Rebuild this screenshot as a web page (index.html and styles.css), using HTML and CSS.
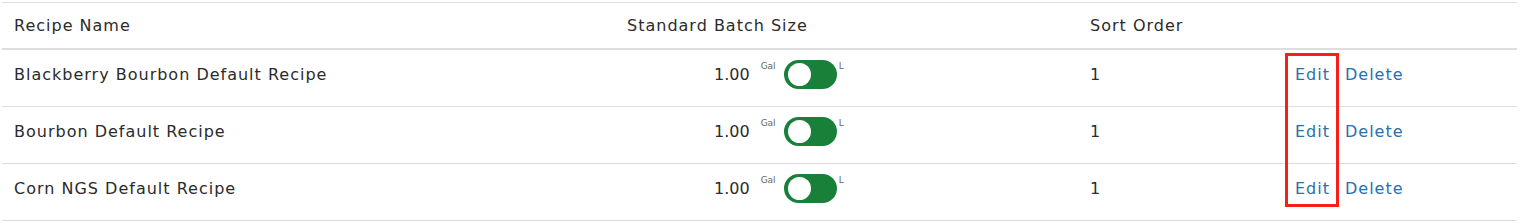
FILE: index.html
```html
<!DOCTYPE html>
<html>
  <head>
    <meta charset="utf-8" />
    <title>Recipes</title>
    <link rel="stylesheet" href="styles.css">
  </head>
  <body>
    <div class="table-wrap">
      <table class="recipe-table">
        <thead>
          <tr>
            <th class="col-name">Recipe Name</th>
            <th class="col-batch">Standard Batch Size</th>
            <th class="col-sort">Sort Order</th>
            <th class="col-actions"></th>
          </tr>
        </thead>
        <tbody>
          <tr>
            <td>Blackberry Bourbon Default Recipe</td>
            <td>
              <div class="batch">
                <span class="qty">1.00</span>
                <span class="unit">Gal</span>
                <span class="switch"><span class="knob"></span></span>
                <span class="unit">L</span>
              </div>
            </td>
            <td>1</td>
            <td><a href="#" class="link">Edit</a><a href="#" class="link">Delete</a></td>
          </tr>
          <tr>
            <td>Bourbon Default Recipe</td>
            <td>
              <div class="batch">
                <span class="qty">1.00</span>
                <span class="unit">Gal</span>
                <span class="switch"><span class="knob"></span></span>
                <span class="unit">L</span>
              </div>
            </td>
            <td>1</td>
            <td><a href="#" class="link">Edit</a><a href="#" class="link">Delete</a></td>
          </tr>
          <tr>
            <td>Corn NGS Default Recipe</td>
            <td>
              <div class="batch">
                <span class="qty">1.00</span>
                <span class="unit">Gal</span>
                <span class="switch"><span class="knob"></span></span>
                <span class="unit">L</span>
              </div>
            </td>
            <td>1</td>
            <td><a href="#" class="link">Edit</a><a href="#" class="link">Delete</a></td>
          </tr>
        </tbody>
      </table>
      <!-- annotation box around the Edit column -->
      <div class="highlight"></div>
    </div>
  </body>
</html>
```

FILE: styles.css
```css
body {
  margin: 0;
  background: #fff;
  font-family: "DejaVu Sans", "Open Sans", sans-serif;
  color: #2b2b2b;
}

.table-wrap {
  position: relative;
  padding: 2px 7px 0 2px;
}

.recipe-table {
  width: 100%;
  border-collapse: collapse;
  table-layout: fixed;
  font-size: 16px;
  letter-spacing: 1px;
}

.recipe-table th {
  font-weight: normal;
  text-align: left;
  height: 45px;
  padding: 0 12px;
  vertical-align: middle;
  border-top: 1px solid #dedede;
  border-bottom: 2px solid #dedede;
}

.recipe-table td {
  height: 48px;
  padding: 0 12px 8px;
  vertical-align: middle;
  border-bottom: 1px solid #dedede;
}

.col-name {
  width: 589px;
}

.col-batch {
  width: 439px;
}

.col-sort {
  width: 181px;
}

.batch {
  display: flex;
  align-items: center;
  margin-left: 87px;
}

.qty {
  margin-right: 11px;
  letter-spacing: 0;
}

.unit {
  font-size: 9px;
  letter-spacing: 0;
  color: #666;
  align-self: flex-start;
  margin-top: 1px;
}

.switch {
  position: relative;
  width: 53px;
  height: 29px;
  border-radius: 15px;
  background: #19803a;
  margin: 0 2px 0 8px;
}

.knob {
  position: absolute;
  left: 4px;
  top: 3px;
  width: 23px;
  height: 23px;
  border-radius: 50%;
  background: #fff;
}

.link {
  color: #2a6fae;
  text-decoration: none;
  margin-right: 15px;
}

.highlight {
  position: absolute;
  left: 1285px;
  top: 53px;
  width: 48px;
  height: 148px;
  border: 3px solid #f5201c;
}
```
